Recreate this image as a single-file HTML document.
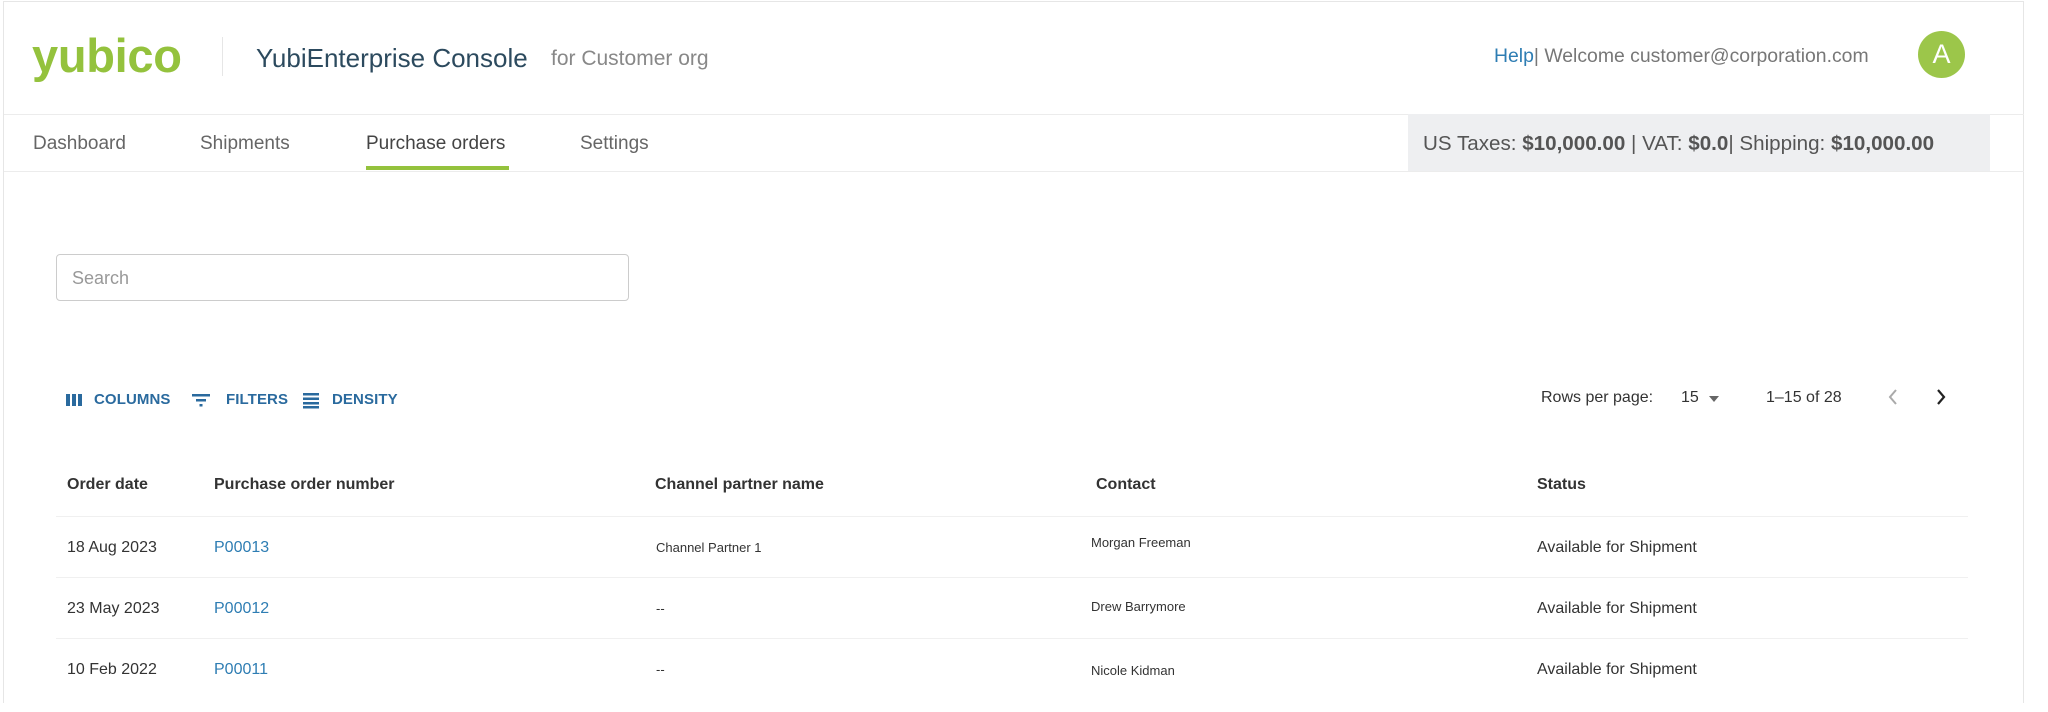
<!DOCTYPE html>
<html><head><meta charset="utf-8"><style>
*{margin:0;padding:0;box-sizing:border-box}
body{width:2048px;height:712px;background:#fff;font-family:"Liberation Sans",sans-serif;position:relative;overflow:hidden;color:#333}
.a{position:absolute;white-space:nowrap}
.card{position:absolute;left:3px;top:1px;width:2021px;height:702px;border:1px solid #e6e6e6;border-bottom:none}
.hl{position:absolute;height:1px;background:#ececec}
.nav{font-size:19px;color:#666;top:133px}
.tb{font-size:15px;color:#2a6a9e;top:391px;font-weight:bold;letter-spacing:0.1px}
.th{font-size:16px;font-weight:bold;color:#333;top:476px}
.td{font-size:16px;color:#333}
.sm{font-size:13px;color:#333}
.lk{font-size:16px;color:#2e7db3}
</style></head><body>
<div class="card"></div>
<div class="a" style="left:32px;top:28px;font-size:47px;font-weight:bold;color:#94c23d;letter-spacing:-0.3px">yubico</div>
<div class="a" style="left:222px;top:37px;width:1px;height:39px;background:#e6e6e6"></div>
<div class="a" style="left:256px;top:43px;font-size:26px;color:#2c4a5e">YubiEnterprise Console</div>
<div class="a" style="left:551px;top:47px;font-size:21px;color:#888">for Customer org</div>
<div class="a" style="left:1494px;top:45px;font-size:19.4px;color:#777"><span style="color:#2e7db3">Help</span>| Welcome customer@corporation.com</div>
<div class="a" style="left:1918px;top:31px;width:47px;height:47px;border-radius:50%;background:#9cc64a;color:#fff;font-size:27px;text-align:center;line-height:47px">A</div>
<div class="hl" style="left:4px;top:114px;width:2020px"></div>
<div class="a nav" style="left:33px">Dashboard</div>
<div class="a nav" style="left:200px">Shipments</div>
<div class="a nav" style="left:366px;color:#444">Purchase orders</div>
<div class="a nav" style="left:580px">Settings</div>
<div class="a" style="left:366px;top:166px;width:143px;height:4px;background:#94c23d"></div>
<div class="hl" style="left:4px;top:171px;width:2020px"></div>
<div class="a" style="left:1408px;top:114px;width:582px;height:57px;background:#eeeff1"></div>
<div class="a" style="left:1423px;top:132px;font-size:20.6px;color:#555">US Taxes: <b>$10,000.00</b> | VAT: <b>$0.0</b>| Shipping: <b>$10,000.00</b></div>
<div class="a" style="left:56px;top:254px;width:573px;height:47px;border:1.5px solid #ccc;border-radius:4px"></div>
<div class="a" style="left:72px;top:268px;font-size:18px;color:#999">Search</div>
<svg class="a" style="left:64px;top:391px" width="20" height="18" viewBox="0 0 20 18"><rect x="2" y="3" width="4" height="12" fill="#2a6a9e"/><rect x="8" y="3" width="4" height="12" fill="#2a6a9e"/><rect x="14" y="3" width="4" height="12" fill="#2a6a9e"/></svg>
<div class="a tb" style="left:94px">COLUMNS</div>
<svg class="a" style="left:191px;top:391px" width="20" height="18" viewBox="0 0 20 18"><rect x="1" y="3" width="18" height="2.5" fill="#2a6a9e"/><rect x="5" y="8" width="10" height="2.5" fill="#2a6a9e"/><rect x="8.5" y="13" width="3" height="2.5" fill="#2a6a9e"/></svg>
<div class="a tb" style="left:226px">FILTERS</div>
<svg class="a" style="left:302px;top:391px" width="18" height="18" viewBox="0 0 18 18"><rect x="1" y="2" width="16" height="2.5" fill="#2a6a9e"/><rect x="1" y="6.5" width="16" height="2.5" fill="#2a6a9e"/><rect x="1" y="11" width="16" height="2.5" fill="#2a6a9e"/><rect x="1" y="15" width="16" height="2.5" fill="#2a6a9e"/></svg>
<div class="a tb" style="left:332px">DENSITY</div>
<div class="a" style="left:1541px;top:389px;font-size:16px;color:#333">Rows per page:</div>
<div class="a" style="left:1681px;top:389px;font-size:16px;color:#333">15</div>
<svg class="a" style="left:1708px;top:395px" width="12" height="8"><path d="M1 1 L11 1 L6 7 Z" fill="#666"/></svg>
<div class="a" style="left:1766px;top:389px;font-size:16px;color:#333">1–15 of 28</div>
<svg class="a" style="left:1886px;top:387px" width="14" height="20"><path d="M10 3 L4 10 L10 17" stroke="#aaa" stroke-width="2" fill="none"/></svg>
<svg class="a" style="left:1934px;top:387px" width="14" height="20"><path d="M4 3 L10 10 L4 17" stroke="#222" stroke-width="2.2" fill="none"/></svg>
<div class="a th" style="left:67px">Order date</div>
<div class="a th" style="left:214px">Purchase order number</div>
<div class="a th" style="left:655px">Channel partner name</div>
<div class="a th" style="left:1096px">Contact</div>
<div class="a th" style="left:1537px">Status</div>
<div class="hl" style="left:56px;top:516px;width:1912px;background:#f0f0f0"></div>
<div class="hl" style="left:56px;top:577px;width:1912px;background:#f0f0f0"></div>
<div class="hl" style="left:56px;top:638px;width:1912px;background:#f0f0f0"></div>
<div class="a td" style="left:67px;top:539px">18 Aug 2023</div>
<div class="a lk" style="left:214px;top:539px">P00013</div>
<div class="a sm" style="left:656px;top:540px">Channel Partner 1</div>
<div class="a sm" style="left:1091px;top:535px">Morgan Freeman</div>
<div class="a td" style="left:1537px;top:539px">Available for Shipment</div>
<div class="a td" style="left:67px;top:600px">23 May 2023</div>
<div class="a lk" style="left:214px;top:600px">P00012</div>
<div class="a sm" style="left:656px;top:601px">--</div>
<div class="a sm" style="left:1091px;top:599px">Drew Barrymore</div>
<div class="a td" style="left:1537px;top:600px">Available for Shipment</div>
<div class="a td" style="left:67px;top:661px">10 Feb 2022</div>
<div class="a lk" style="left:214px;top:661px">P00011</div>
<div class="a sm" style="left:656px;top:662px">--</div>
<div class="a sm" style="left:1091px;top:663px">Nicole Kidman</div>
<div class="a td" style="left:1537px;top:661px">Available for Shipment</div>
</body></html>
